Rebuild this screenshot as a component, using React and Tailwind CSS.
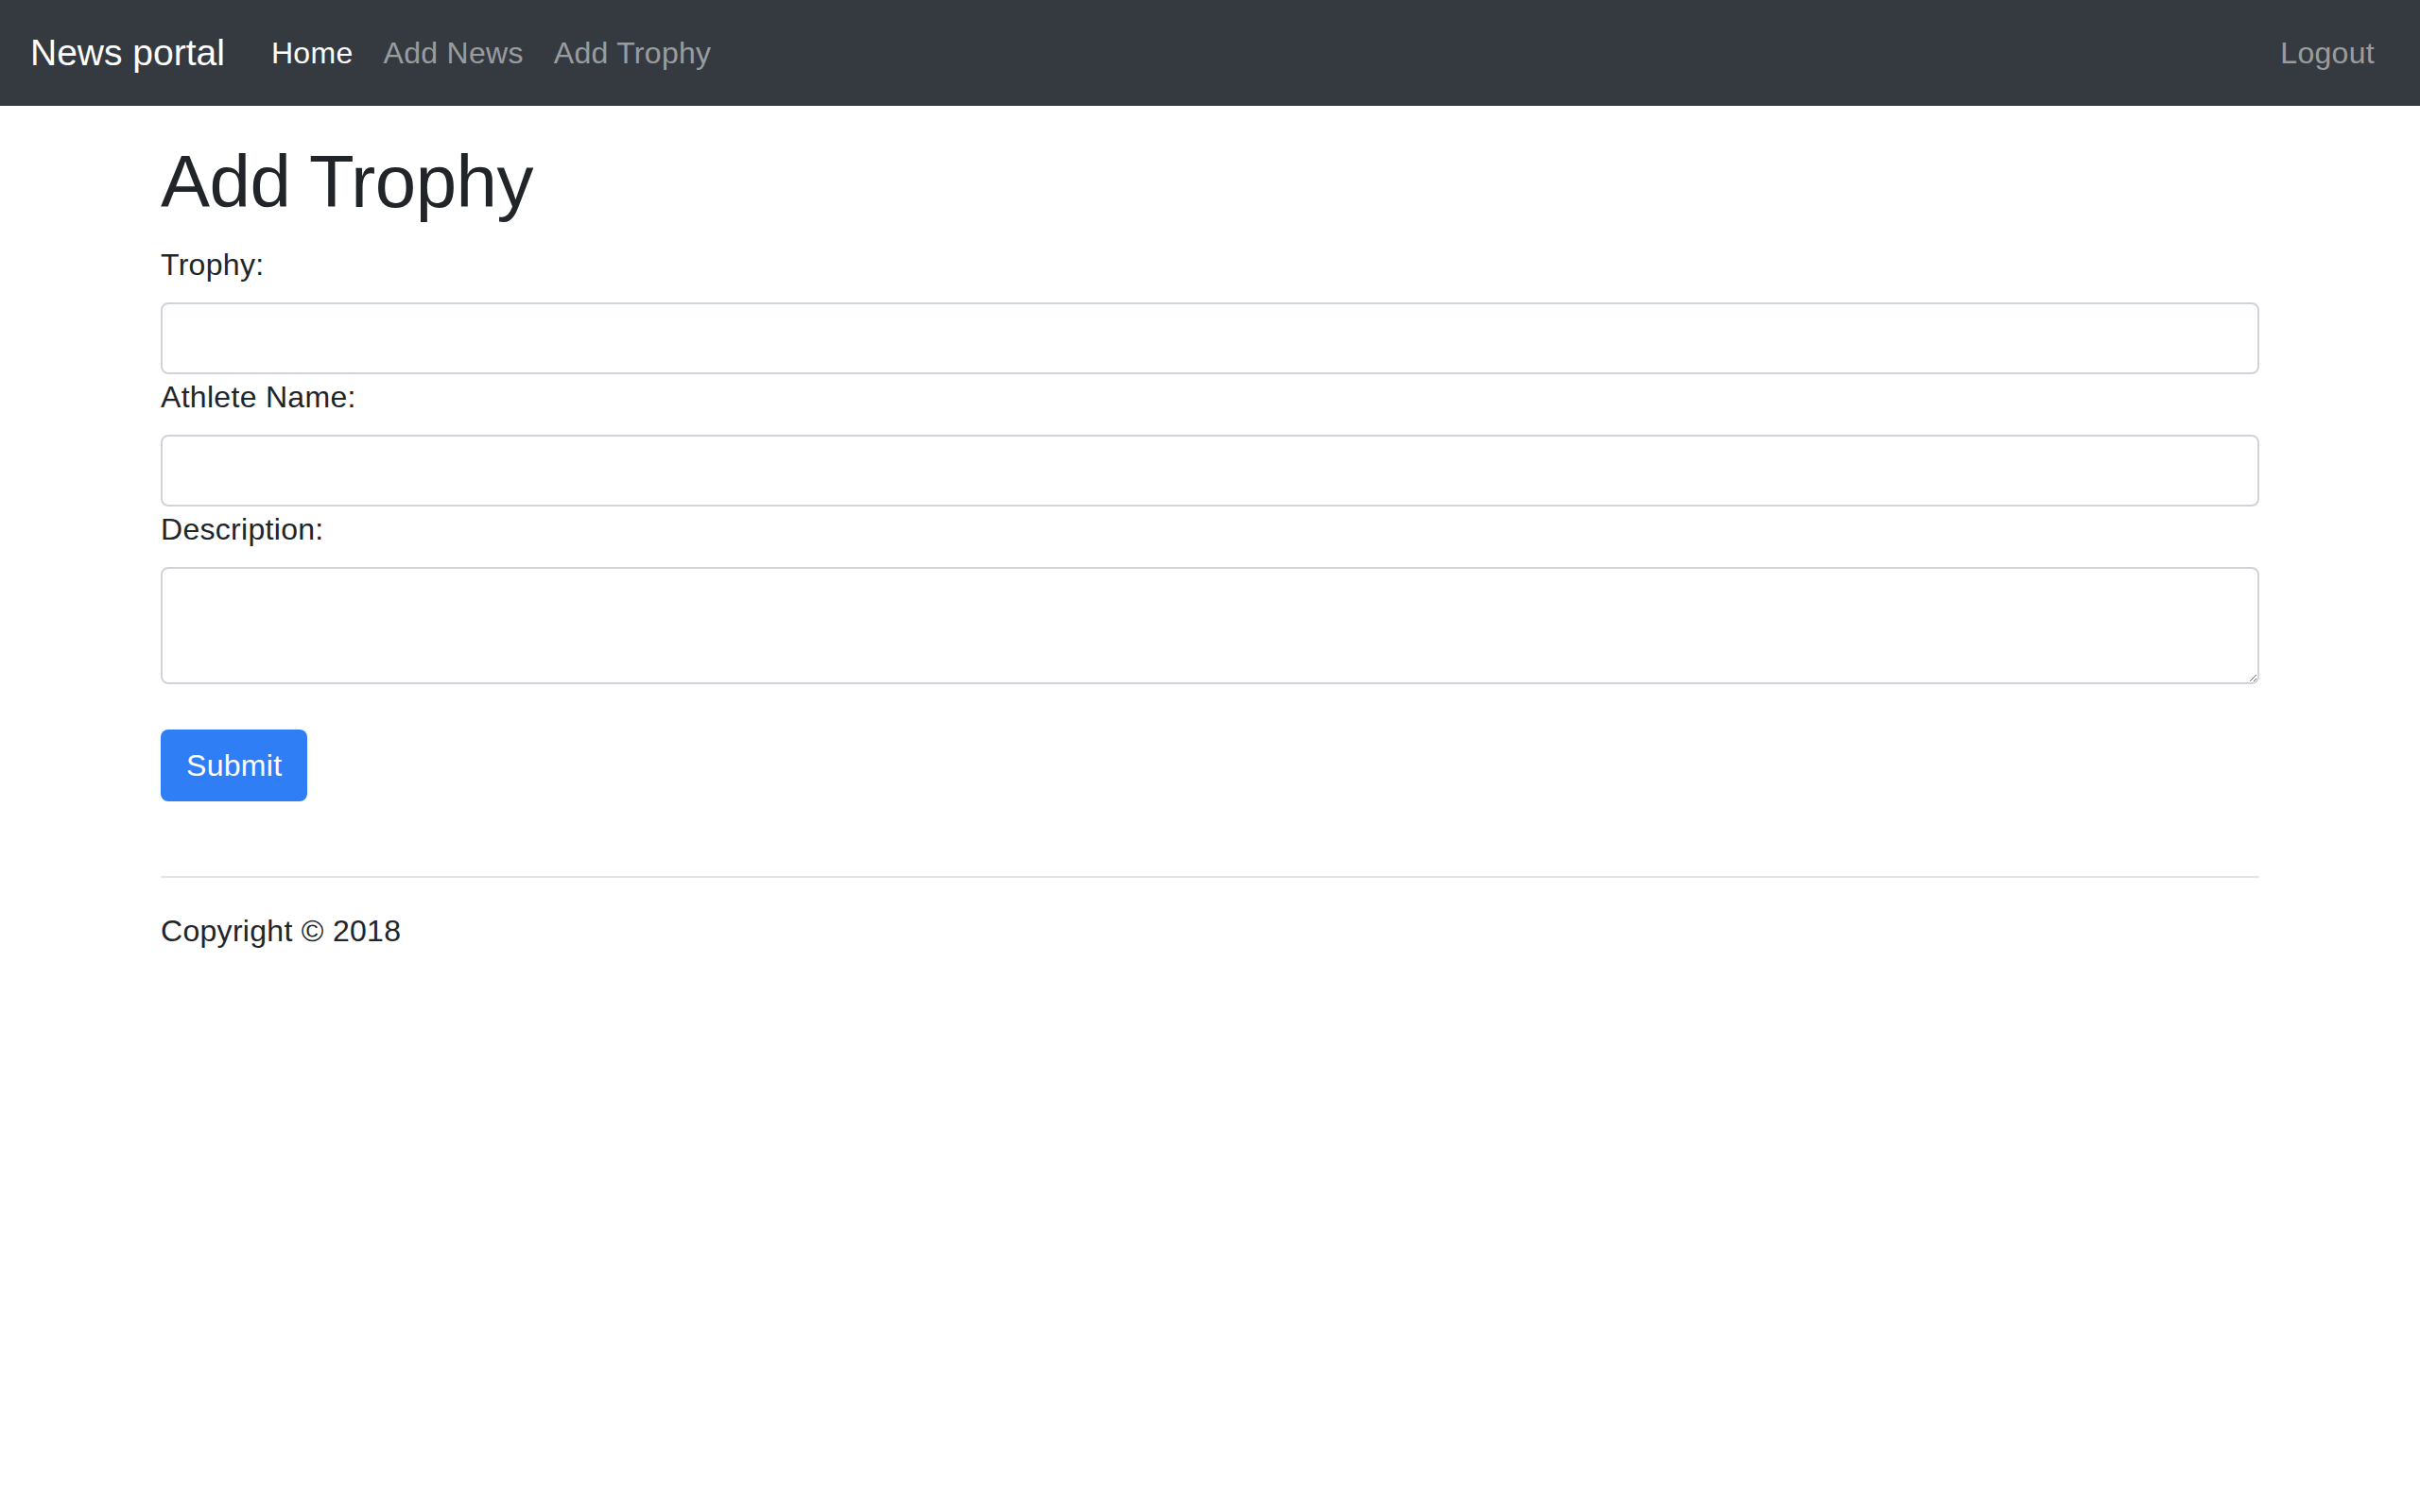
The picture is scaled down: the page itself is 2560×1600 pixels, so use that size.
export default function App() {
  const font = { fontFamily: '"Liberation Sans", Arial, sans-serif' };
  return (
    <div className="min-h-screen bg-white text-[#212529] text-[32px] leading-[48px] tracking-[0.3px]" style={font}>
      <nav className="h-[112px] bg-[#343a40] flex items-center px-[32px]">
        <a className="text-[39px] leading-[60px] text-white mr-[33px] tracking-normal" href="#">News portal</a>
        <ul className="flex items-center">
          <li><a className="block px-[16px] text-white" href="#">Home</a></li>
          <li><a className="block px-[16px] text-[rgba(255,255,255,0.5)]" href="#">Add News</a></li>
          <li><a className="block px-[16px] text-[rgba(255,255,255,0.5)]" href="#">Add Trophy</a></li>
        </ul>
        <ul className="flex items-center ml-auto">
          <li><a className="block px-[16px] text-[rgba(255,255,255,0.5)]" href="#">Logout</a></li>
        </ul>
      </nav>
      <div className="w-[2280px] mx-auto px-[30px]">
        <h1 className="text-[78px] leading-[96px] font-medium mt-[32px] mb-[16px] tracking-[-0.5px]">Add Trophy</h1>
        <form>
          <label className="block mb-[16px]">Trophy:</label>
          <input type="text" className="block w-full h-[76px] border-2 border-[#ced4da] rounded-[8px] px-[24px] outline-none" />
          <label className="block mb-[16px]">Athlete Name:</label>
          <input type="text" className="block w-full h-[76px] border-2 border-[#ced4da] rounded-[8px] px-[24px] outline-none" />
          <label className="block mb-[16px]">Description:</label>
          <textarea rows={2} className="block w-full h-[124px] border-2 border-[#ced4da] rounded-[8px] px-[24px] py-[12px] outline-none"></textarea>
          <button type="button" className="mt-[48px] h-[76px] px-[27px] bg-[#307ef6] text-white rounded-[8px] leading-[48px] tracking-[0.3px]">Submit</button>
        </form>
        <hr className="mt-[79px] mb-[32px] border-0 border-t-2 border-[#e5e5e5]" />
        <p>Copyright © 2018</p>
      </div>
    </div>
  );
}
